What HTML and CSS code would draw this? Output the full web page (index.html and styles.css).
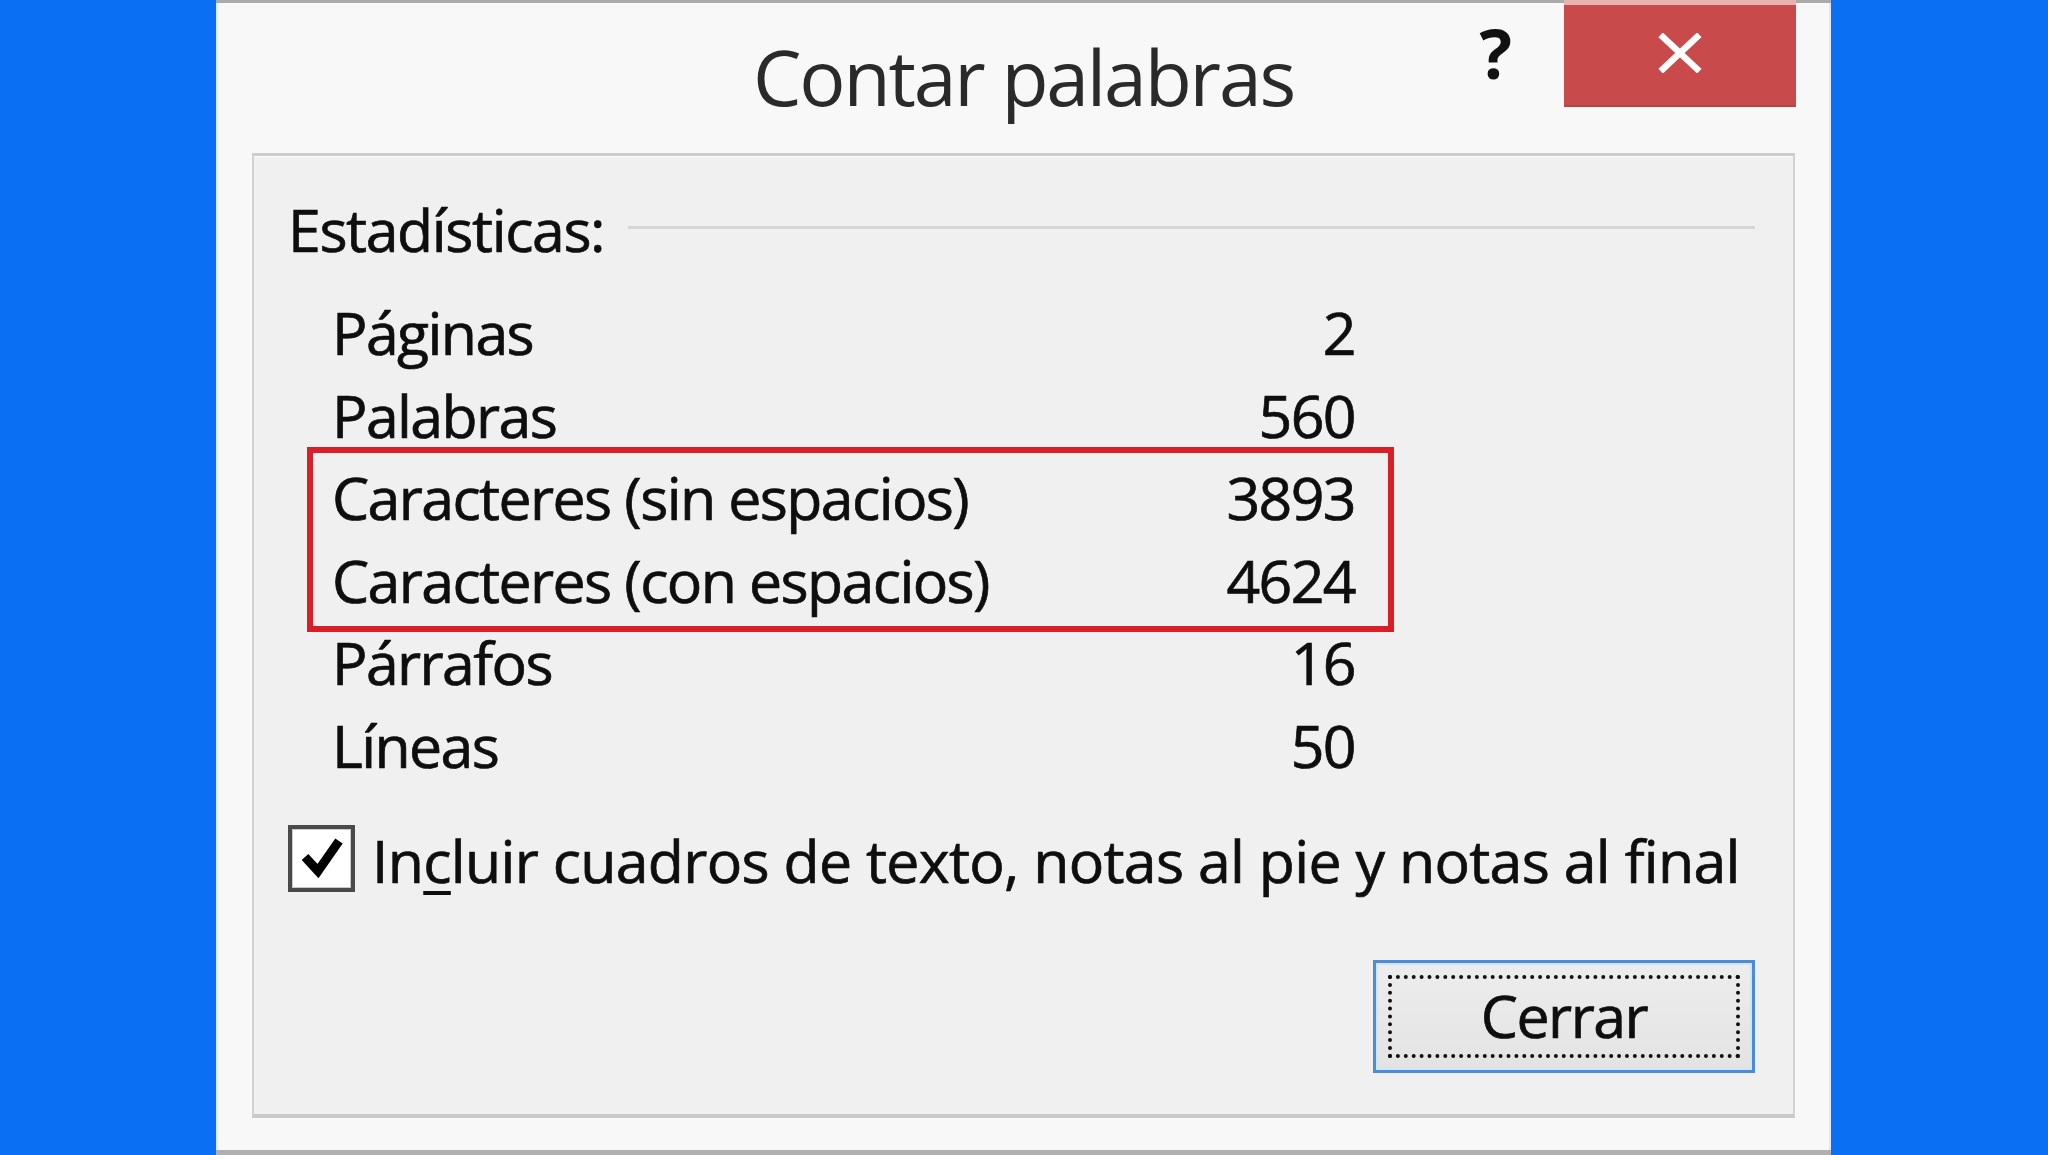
FILE: index.html
```html
<!DOCTYPE html>
<html lang="es">
<head>
<meta charset="utf-8">
<title>Contar palabras</title>
<link rel="stylesheet" href="styles.css">
</head>
<body>
<div class="dialog">
  <div class="titlebar">
    <div class="title">Contar palabras</div>
    <div class="controls">
      <span class="help">?</span>
      <span class="close">
        <svg viewBox="0 0 46 40" width="46" height="40"><path d="M6 4 L40 36 M40 4 L6 36" stroke="#fff" stroke-width="6.5" stroke-linecap="square" fill="none"/></svg>
      </span>
    </div>
  </div>
  <div class="group">
    <div class="legend">
      <span class="legend-text">Estadísticas:</span>
      <span class="legend-line"></span>
    </div>
    <div class="stats">
      <div class="row"><span>Páginas</span><span>2</span></div>
      <div class="row"><span>Palabras</span><span>560</span></div>
      <div class="highlight">
        <div class="row"><span>Caracteres (sin espacios)</span><span>3893</span></div>
        <div class="row"><span>Caracteres (con espacios)</span><span>4624</span></div>
      </div>
      <div class="row"><span>Párrafos</span><span>16</span></div>
      <div class="row"><span>Líneas</span><span>50</span></div>
    </div>
    <div class="check-row">
      <span class="checkbox">
        <svg viewBox="0 0 58 58" width="58" height="58"><path d="M12 28 L25 42 L46 12" stroke="#000" stroke-width="9" fill="none" stroke-linejoin="miter"/></svg>
      </span>
      <span class="check-label">In<u>c</u>luir cuadros de texto, notas al pie y notas al final</span>
    </div>
    <div class="button-row">
      <div class="button"><span class="focus">Cerrar</span></div>
    </div>
  </div>
</div>
</body>
</html>
```

FILE: styles.css
```css
html, body {
  margin: 0;
  padding: 0;
}
body {
  background: #0a6ff2;
  width: 2048px;
  height: 1155px;
  overflow: hidden;
  font-family: "Open Sans", "Noto Sans", sans-serif;
  color: #0e0e0e;
}
.dialog {
  box-sizing: border-box;
  width: 1615px;
  height: 1155px;
  margin-left: 216px;
  background: #f8f8f8;
  border-top: 3px solid #ababab;
  border-bottom: 5px solid #b0b0b0;
  box-shadow: inset 2px 0 0 #dbe8f8, inset -2px 0 0 #dbe8f8;
}
.titlebar {
  height: 150px;
  display: grid;
  grid-template-columns: 1fr auto 1fr;
  align-items: start;
}
.title {
  grid-column: 2;
  font-size: 77px;
  line-height: 100px;
  margin-top: 24px;
  color: #2a2a2a;
  letter-spacing: -2.2px;
}
.controls {
  grid-column: 3;
  justify-self: end;
  display: flex;
  align-items: flex-start;
  margin-right: 35px;
}
.help {
  font-size: 68px;
  font-weight: 700;
  line-height: 80px;
  margin-top: 10px;
  margin-right: 52px;
  color: #111;
}
.close {
  box-sizing: border-box;
  width: 232px;
  height: 107px;
  margin-top: -3px;
  background: #c94a4b;
  border-top: 5px solid #e7b3b3;
  border-bottom: 2px solid #b64244;
  display: flex;
  align-items: center;
  justify-content: center;
  padding-bottom: 4px;
}
.group {
  box-sizing: border-box;
  margin: 0 36px;
  height: 965px;
  background: #f0f0f0;
  border: 2px solid #d2d2d2;
  border-top: 3px solid #cdcdcd;
  border-bottom: 4px solid #c9c9c9;
  box-shadow: inset 0 1px 0 #fafafa;
  padding: 32px 38px 0 34px;
  -webkit-text-stroke: 0.7px #0e0e0e;
}
.legend {
  display: flex;
  align-items: center;
  font-size: 59px;
  line-height: 82px;
}
.legend-text {
  letter-spacing: -1.4px;
}
.legend-line {
  flex: 1;
  height: 3px;
  background: #d6d6d6;
  margin-left: 24px;
  margin-top: -4px;
}
.stats {
  margin: 21px 0 0 44px;
  width: 1023px;
  font-size: 59px;
  line-height: 82.6px;
}
.row {
  display: flex;
  justify-content: space-between;
  letter-spacing: -1.6px;
}
.highlight {
  margin: -9px -39px -11px -25px;
  padding: 3px 33px 5px 19px;
  border: 6px solid #d81f27;
}
.check-row {
  display: flex;
  align-items: flex-start;
  margin-top: 32px;
  font-size: 59px;
  line-height: 82.6px;
}
.checkbox {
  box-sizing: border-box;
  width: 67px;
  height: 67px;
  margin-top: 6px;
  border: 4px solid #4a4a4a;
  background: #fff;
  box-shadow: inset 0 0 0 1px #c8c8c8;
  display: flex;
  align-items: center;
  justify-content: center;
}
.check-label {
  margin-left: 17px;
  letter-spacing: -0.7px;
}
.check-label u {
  text-decoration-thickness: 4px;
  text-underline-offset: 8px;
}
.button-row {
  display: flex;
  justify-content: flex-end;
  margin-top: 59px;
}
.button {
  box-sizing: border-box;
  width: 382px;
  height: 113px;
  border: 3px solid #4b8bd7;
  box-shadow: inset 0 0 0 2px #cfe6fa;
  background: linear-gradient(#ededed, #e3e3e3);
  padding: 12px;
  display: flex;
}
.focus {
  flex: 1;
  border: 4px dotted #111;
  display: flex;
  align-items: center;
  justify-content: center;
  font-size: 59px;
  letter-spacing: -1.5px;
  padding-bottom: 4px;
}
```
